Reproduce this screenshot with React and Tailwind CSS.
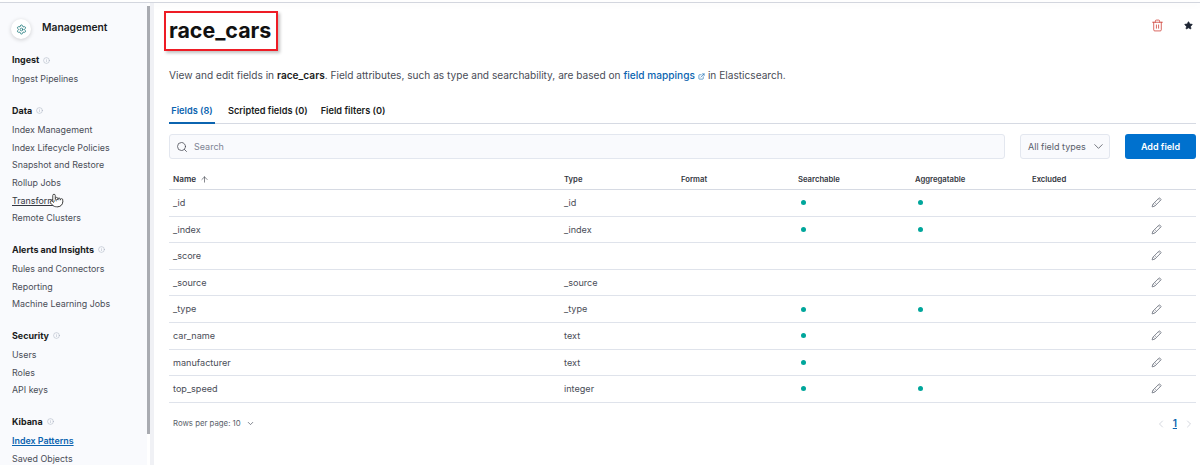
import React from "react";
import { Settings, Search, ArrowUp, ChevronDown, ChevronLeft, ChevronRight, Trash2, Star, ExternalLink, Info, Pointer } from "lucide-react";

const nav = [
  { title: "Ingest", items: ["Ingest Pipelines"] },
  { title: "Data", items: ["Index Management", "Index Lifecycle Policies", "Snapshot and Restore", "Rollup Jobs", "Transforms", "Remote Clusters"] },
  { title: "Alerts and Insights", items: ["Rules and Connectors", "Reporting", "Machine Learning Jobs"] },
  { title: "Security", items: ["Users", "Roles", "API keys"] },
  { title: "Kibana", items: ["Index Patterns", "Saved Objects"] },
];

const rows = [
  ["_id", "_id", true, true],
  ["_index", "_index", true, true],
  ["_score", "", false, false],
  ["_source", "_source", false, false],
  ["_type", "_type", true, true],
  ["car_name", "text", true, false],
  ["manufacturer", "text", true, false],
  ["top_speed", "integer", true, true],
];

const cols = "grid grid-cols-[391px_117px_117px_117px_117px_117px_1fr] items-center";

function Dot() {
  return <span className="block ml-[7px] w-[5px] h-[5px] rounded-full bg-[#00a69b]" />;
}

function PencilIcon() {
  return (
    <svg viewBox="0 0 12 12" className="w-[11px] h-[11px] text-[#7a7f8a]" fill="none" stroke="currentColor" strokeWidth="1" strokeLinejoin="round">
      <path d="M1.2 10.8 L2 7.9 L8.6 1.3 Q9.2 0.8 9.8 1.3 L10.7 2.2 Q11.2 2.8 10.7 3.4 L4.1 10 Z" />
      <path d="M2.4 7.6 L4.4 9.6 M4 6 L6 8 M8 2 L10 4" strokeWidth="0.7" />
    </svg>
  );
}

function NavLink({ label }) {
  const active = label === "Index Patterns";
  const hover = label === "Transforms";
  return (
    <div className="relative h-[17.7px] flex items-center">
      <span className={active ? "font-semibold text-[#0b64b0] underline" : hover ? "text-[#343741] underline" : "text-[#4a4d57]"}>{label}</span>
      {hover && (
        <Pointer className="absolute left-[37px] top-[1px] w-[15px] h-[17px] text-[#333] fill-white" strokeWidth={1.4} />
      )}
    </div>
  );
}

export default function App() {
  return (
    <div className="relative w-[1200px] h-[465px] overflow-hidden bg-white text-[#343741] font-['Inter',sans-serif]">
      <div className="pt-[1.5px] h-[3px]">
        <div className="h-[1.5px] bg-[#d3d6de] shadow-[0_2px_6px_rgba(0,0,0,0.08)]" />
      </div>
      <div className="flex h-[462px]">
        <aside className="w-[147px] shrink-0 bg-[#f9fafd] pl-[12px] text-[8.9px] overflow-hidden">
          <div className="flex items-center h-[38px] mt-[7px] -ml-[1px]">
            <span className="w-[20px] h-[20px] rounded-full bg-white shadow-[0_1px_4px_rgba(0,0,0,0.18)] flex items-center justify-center">
              <Settings className="w-[11px] h-[11px] text-[#0e6f72]" strokeWidth={1.6} />
            </span>
            <span className="ml-[11px] text-[10.3px] font-semibold text-[#1a1c21] -mt-[3px]">Management</span>
          </div>
          {nav.map((s, i) => (
            <div key={s.title} className={i === 0 ? "mt-[2px]" : "mt-[13px]"}>
              <div className="h-[20px] flex items-center gap-[4px] font-bold text-[#1a1c21] text-[8.95px]">
                {s.title}
                <Info className="w-[7px] h-[7px] text-[#98a2b3]" strokeWidth={1.4} />
              </div>
              {s.items.map((l) => (
                <NavLink key={l} label={l} />
              ))}
            </div>
          ))}
        </aside>
        <div className="w-[3px] shrink-0 bg-[#a9abb1] h-[428px] mt-[3px]" />
        <div className="w-[4px] shrink-0 bg-[#f0f1f5]" />
        <main className="flex-1 min-w-0 pl-[15px] pr-[4px]">
          <div className="flex items-start justify-between h-[58px]">
            <h1 className="mt-[8px] -ml-[5px] h-[40px] w-[114px] border-2 border-[#ee1c25] shadow-[2px_2px_3px_rgba(0,0,0,0.25)] pl-[3px] flex items-center text-[21.4px] font-bold text-[#111] leading-none">
              race_cars
            </h1>
            <div className="flex items-center mt-[16px]">
              <Trash2 className="w-[13px] h-[13px] text-[#d0453c]" strokeWidth={1.5} />
              <Star className="ml-[20px] mr-[3px] w-[9px] h-[9px] text-[#1d2433] fill-[#1d2433]" />
            </div>
          </div>
          <p className="h-[30px] flex items-center text-[10.15px] text-[#4a4d57] whitespace-pre">
            View and edit fields in <b className="font-semibold text-[#1a1c21]">race_cars</b>. Field attributes, such as type and searchability, are based on{" "}
            <span className="font-medium text-[#0b64b0]">field mappings</span>
            <ExternalLink className="mx-[3px] w-[7px] h-[7px] text-[#0b64b0]" />
            in Elasticsearch.
          </p>
          <div className="mt-[9px] flex h-[24px] border-b border-[#d6dae3] text-[9.2px] font-semibold text-[#1a1c21]">
            <div className="w-[46px] text-center pt-[4px] text-[#0b64b0] border-b-2 border-[#0b64b0] h-[24px]">Fields (8)</div>
            <div className="ml-[13px] pt-[4px]">Scripted fields (0)</div>
            <div className="ml-[13px] pt-[4px]">Field filters (0)</div>
          </div>
          <div className="mt-[10px] flex items-center h-[25px]">
            <div className="w-[836px] h-[25px] rounded-[3px] border border-[#e3e7ef] bg-[#f9fafd] flex items-center pl-[6px] text-[#7e8494] text-[9px]">
              <Search className="w-[12px] h-[12px] text-[#4a4d57]" strokeWidth={1.6} />
              <span className="ml-[6px]">Search</span>
            </div>
            <div className="ml-[15px] w-[90px] h-[25px] rounded-[3px] border border-[#e3e7ef] bg-[#f9fafd] flex items-center justify-between pl-[7px] pr-[2px] text-[9px] text-[#5a5f6b]">
              All field types
              <ChevronDown className="w-[15px] h-[15px] mr-[1px] text-[#4a4d57]" strokeWidth={1.2} />
            </div>
            <button className="ml-[15px] w-[71px] h-[25px] rounded-[3px] bg-[#0071ce] text-white text-[9px] font-semibold">Add field</button>
          </div>
          <div className={`${cols} mt-[8px] h-[23px] pt-[3px] border-b border-[#d6dae3] text-[7.7px] font-semibold text-[#343741]`}>
            <div className="pl-[4px] flex items-center gap-[4px] text-[8.2px]">Name <ArrowUp className="w-[9px] h-[9px]" strokeWidth={1.6} /></div>
            <div className="pl-[4px]">Type</div>
            <div className="pl-[4px]">Format</div>
            <div className="pl-[4px]">Searchable</div>
            <div className="pl-[4px]">Aggregatable</div>
            <div className="pl-[4px]">Excluded</div>
            <div />
          </div>
          {rows.map((r) => (
            <div key={r[0]} className={`${cols} h-[26.6px] border-b border-[#dfe3eb] text-[9.1px] text-[#4a4d57]`}>
              <div className="pl-[4px]">{r[0]}</div>
              <div className="pl-[4px]">{r[1]}</div>
              <div />
              <div>{r[2] && <Dot />}</div>
              <div>{r[3] && <Dot />}</div>
              <div />
              <div className="pl-[6px]"><PencilIcon /></div>
            </div>
          ))}
          <div className="mt-[13px] flex items-center justify-between h-[16px] text-[7.8px] text-[#5a5f6b] pl-[4px] w-[1027px]">
            <div className="flex items-center gap-[5px]">Rows per page: 10 <ChevronDown className="w-[9px] h-[9px]" /></div>
            <div className="flex items-center text-[#c3c7d1]">
              <ChevronLeft className="w-[12px] h-[12px]" strokeWidth={1.4} />
              <span className="mx-[6px] text-[10px] font-semibold text-[#0b64b0] underline">1</span>
              <ChevronRight className="w-[12px] h-[12px] mr-[1px]" strokeWidth={1.4} />
            </div>
          </div>
        </main>
      </div>
    </div>
  );
}
